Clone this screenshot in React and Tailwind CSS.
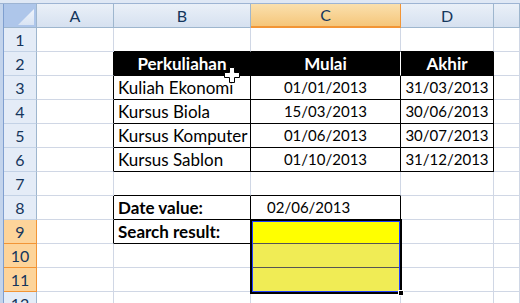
import React from "react";

const FONT = { fontFamily: "Lato, 'Open Sans', sans-serif" };

const colW = ["w-[77px]", "w-[137px]", "w-[150px]", "w-[93px]", "flex-1"];

// cell config per row: [A, B, C, D, E]; each entry { text, cls }
const rows = [
  { n: 1, cells: [{}, { cls: "border-b-black" }, { cls: "border-b-black" }, { cls: "border-b-black" }, {}] },
  {
    n: 2,
    cells: [
      { cls: "border-r-black" },
      { text: "Perkuliahan", cls: "bg-black text-white font-bold text-[17px] justify-center border-r-black border-b-black" },
      { text: "Mulai", cls: "bg-black text-white font-bold text-[17px] justify-center border-r-white border-b-black" },
      { text: "Akhir", cls: "bg-black text-white font-bold text-[17px] justify-center border-r-black border-b-black" },
      {},
    ],
  },
  ...[
    ["Kuliah Ekonomi", "01/01/2013", "31/03/2013"],
    ["Kursus Biola", "15/03/2013", "30/06/2013"],
    ["Kursus Komputer", "01/06/2013", "30/07/2013"],
    ["Kursus Sablon", "01/10/2013", "31/12/2013"],
  ].map(([b, c, d], i) => ({
    n: i + 3,
    cells: [
      { cls: "border-r-black" },
      { text: b, cls: "text-[17px] border-r-black border-b-black pl-[4px]" },
      { text: c, cls: "border-r-black border-b-black justify-center" },
      { text: d, cls: "border-r-black border-b-black justify-center" },
      {},
    ],
  })),
  { n: 7, cells: [{}, { cls: "border-b-black" }, { cls: "border-b-black" }, {}, {}] },
  {
    n: 8,
    cells: [
      { cls: "border-r-black" },
      { text: "Date value:", cls: "font-bold text-[17px] border-r-black border-b-black pl-[4px]" },
      { text: "02/06/2013", cls: "border-r-black border-b-black pl-[16px]" },
      {},
      {},
    ],
  },
  {
    n: 9,
    sel: true,
    cells: [
      { cls: "border-r-black" },
      { text: "Search result:", cls: "font-bold text-[17px] border-r-black border-b-black pl-[4px]" },
      { cls: "bg-[#ffff00] border-b-[#555555] relative", overlay: true },
      {},
      {},
    ],
  },
  { n: 10, sel: true, cells: [{}, {}, { cls: "bg-[#f0ec55] border-b-[#555555]" }, {}, {}] },
  { n: 11, sel: true, cells: [{}, {}, { cls: "bg-[#f0ec55] border-b-[#555555]" }, {}, {}] },
  { n: 12, cells: [{}, {}, {}, {}, {}] },
];

function Selection() {
  return (
    <div className="absolute -left-[1px] -top-[1px] w-[152px] h-[75px] border-2 border-black z-10">
      <div className="w-full h-full border border-[#1f3fff]" />
      <div className="absolute -right-[4px] -bottom-[4px] w-[6px] h-[6px] bg-black border border-white" />
    </div>
  );
}

function ColHeader({ label, w, sel }) {
  return (
    <div
      className={
        "box-border h-[24px] flex items-center justify-center border-r text-[16px] " +
        w +
        (sel
          ? " bg-gradient-to-b from-[#fae0ad] to-[#f5c67a] border-b-2 border-b-[#f29536] border-r-[#f29536] text-[#15365c]"
          : " bg-gradient-to-b from-[#eaf0f8] to-[#d6e1f0] border-b border-b-[#9eb6ce] border-r-[#9eb6ce] text-[#15365c]")
      }
    >
      {label}
    </div>
  );
}

export default function App() {
  return (
    <div className="w-[520px] h-[303px] overflow-hidden bg-white relative" style={FONT}>
      {/* top strip */}
      <div className="h-[4px] bg-[#dfe8f5] border-b border-b-[#9db4d3]" />
      <div className="flex">
        <div className="w-[4px] h-[300px] bg-[#c3d4ec] border-r border-r-[#7f9fcf]" />
        <div className="flex-1">
          {/* column headers */}
          <div className="flex">
            <div className="box-border w-[33px] h-[24px] bg-[#aec6ea] border-r border-b border-[#9eb6ce] relative">
              <svg width="33" height="24" className="absolute left-0 top-0">
                <defs>
                  <linearGradient id="tri" x1="0" y1="0" x2="0" y2="1">
                    <stop offset="0" stopColor="#eef3fb" />
                    <stop offset="1" stopColor="#d9e4f3" />
                  </linearGradient>
                </defs>
                <polygon points="14,21 30,21 30,5" fill="url(#tri)" />
              </svg>
            </div>
            <ColHeader label="A" w="w-[77px]" />
            <ColHeader label="B" w="w-[137px]" />
            <ColHeader label="C" w="w-[150px]" sel />
            <ColHeader label="D" w="w-[93px]" />
            <ColHeader label="" w="flex-1" />
          </div>
          {rows.map((r) => (
            <div key={r.n} className="flex">
              <div
                className={
                  "box-border w-[33px] h-[24px] flex items-center justify-center border-r text-[16px] text-[#15365c] " +
                  (r.sel
                    ? "bg-[#fdd49a] border-b border-b-[#f29536] border-r-[#f29536]"
                    : "bg-[#e4ecf7] border-b border-b-[#c3d2e6] border-r-[#9eb6ce]")
                }
              >
                {r.n}
              </div>
              {r.cells.map((c, i) => (
                <div
                  key={i}
                  className={
                    "box-border h-[24px] flex items-end pb-[2px] px-[3px] text-[15px] leading-[19px] text-black whitespace-nowrap border-r border-b border-[#d0d7e5] " +
                    colW[i] +
                    " " +
                    (c.cls || "")
                  }
                >
                  {c.text}
                  {c.overlay && <Selection />}
                </div>
              ))}
            </div>
          ))}
        </div>
      </div>
      {/* mouse cursor */}
      <svg width="17" height="17" className="absolute left-[224px] top-[67px]" viewBox="0 0 17 17">
        <path
          d="M5.5 0.5 H10.5 V5.5 H15.5 V10.5 H10.5 V15.5 H5.5 V10.5 H0.5 V5.5 H5.5 Z"
          fill="white"
          stroke="black"
          strokeWidth="1"
        />
      </svg>
    </div>
  );
}
